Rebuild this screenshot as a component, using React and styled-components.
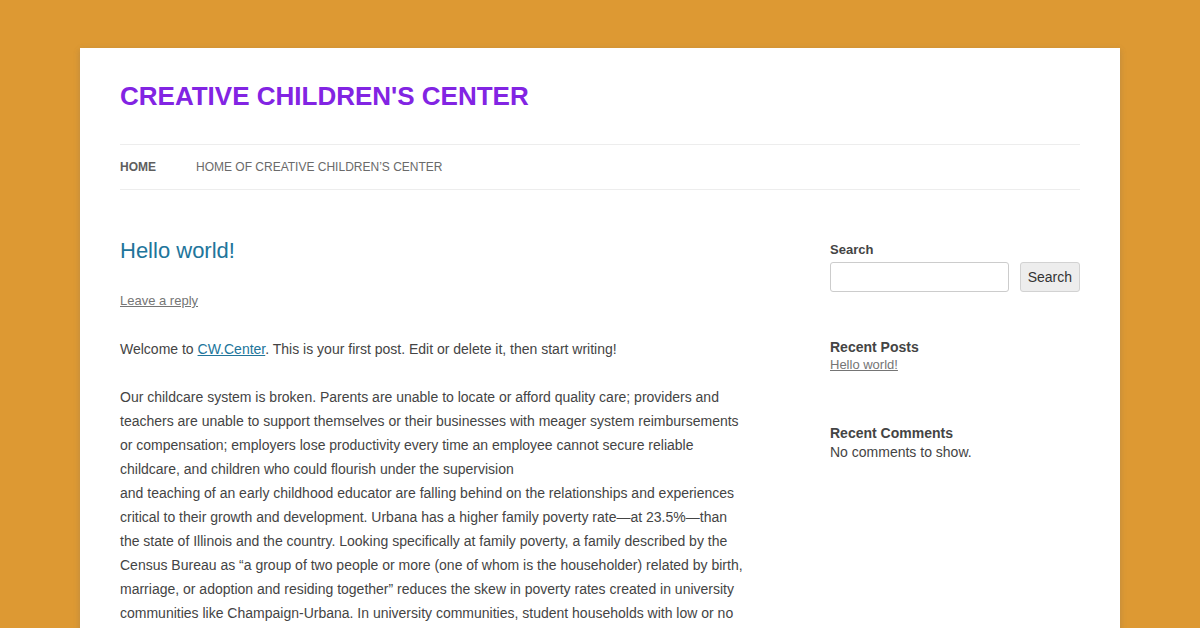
import styled, { createGlobalStyle } from "styled-components";

const GlobalStyle = createGlobalStyle`
  html, body {
    margin: 0;
    padding: 0;
    background: #dd9933;
    font-family: "Liberation Sans", Arial, sans-serif;
    color: #444;
  }
`;

const Page = styled.div`
  padding: 48px 80px 0;
  height: 628px;
  box-sizing: border-box;
  overflow: hidden;
`;

const Site = styled.div`
  background: #fff;
  padding: 0 40px;
  min-height: 700px;
  box-shadow: 0 2px 6px rgba(100, 100, 100, 0.3);
`;

const Header = styled.header`
  padding-top: 24px;
`;

const SiteTitle = styled.h1`
  margin: 0;
  font-size: 26px;
  line-height: 48px;
  font-weight: bold;
  color: #8224e3;
`;

const Nav = styled.nav`
  margin-top: 24px;
  border-top: 1px solid #ededed;
  border-bottom: 1px solid #ededed;
  display: flex;
  gap: 40px;
`;

const NavItem = styled.a`
  font-size: 12px;
  line-height: 44px;
  text-transform: uppercase;
  text-decoration: none;
  color: ${(p) => (p.$current ? "#5e5e5e" : "#6a6a6a")};
  font-weight: ${(p) => (p.$current ? "bold" : "normal")};
`;

const Main = styled.div`
  display: flex;
  justify-content: space-between;
  padding-top: 48px;
`;

const Content = styled.main`
  width: 625px;
`;

const EntryTitle = styled.h1`
  margin: 0;
  font-size: 22px;
  line-height: 26px;
  font-weight: normal;
  color: #21759b;
`;

const Meta = styled.a`
  display: block;
  margin-top: 25px;
  font-size: 13px;
  line-height: 24px;
  color: #757575;
  text-decoration: underline;
`;

const Para = styled.p`
  margin: 24px 0 0;
  font-size: 14px;
  line-height: 24px;
  color: #444;

  & + & {
    margin-top: 24px;
  }

  a {
    color: #21759b;
    text-decoration: underline;
  }
`;

const Sidebar = styled.aside`
  width: 250px;
`;

const Label = styled.div`
  font-size: 13px;
  line-height: 24px;
  font-weight: bold;
  color: #444;
`;

const SearchRow = styled.div`
  display: flex;
  gap: 11px;
`;

const SearchInput = styled.input`
  flex: 1;
  height: 30px;
  box-sizing: border-box;
  border: 1px solid #ccc;
  border-radius: 3px;
  padding: 0 6px;
  font-family: inherit;
  min-width: 0;
`;

const SearchButton = styled.button`
  height: 30px;
  padding: 0 7px;
  font-family: "Liberation Sans", Arial, sans-serif;
  font-size: 14px;
  color: #333;
  background: #ededed;
  border: 1px solid #d2d2d2;
  border-radius: 3px;
`;

const Widget = styled.section`
  margin-top: ${(p) => p.$gap}px;
`;

const WidgetTitle = styled.h3`
  margin: 0;
  font-size: 14px;
  line-height: 20px;
  font-weight: bold;
  color: #444;
`;

const WidgetLink = styled.a`
  display: block;
  font-size: 13px;
  line-height: 16px;
  color: #757575;
  text-decoration: underline;
`;

const WidgetText = styled.div`
  font-size: 14px;
  line-height: 18px;
  color: #444;
`;

export default function App() {
  return (
    <>
      <GlobalStyle />
      <Page>
        <Site>
          <Header>
            <SiteTitle>CREATIVE CHILDREN'S CENTER</SiteTitle>
            <Nav>
              <NavItem $current>Home</NavItem>
              <NavItem>Home of Creative Children’s Center</NavItem>
            </Nav>
          </Header>
          <Main>
            <Content>
              <EntryTitle>Hello world!</EntryTitle>
              <Meta>Leave a reply</Meta>
              <Para>
                Welcome to <a>CW.Center</a>. This is your first post. Edit or
                delete it, then start writing!
              </Para>
              <Para>
                Our childcare system is broken. Parents are unable to locate or
                afford quality care; providers and teachers are unable to
                support themselves or their businesses with meager system
                reimbursements or compensation; employers lose productivity
                every time an employee cannot secure reliable childcare, and
                children who could flourish under the supervision
                <br />
                and teaching of an early childhood educator are falling behind
                on the relationships and experiences critical to their growth
                and development. Urbana has a higher family poverty rate—at
                23.5%—than the state of Illinois and the country. Looking
                specifically at family poverty, a family described by the
                Census Bureau as “a group of two people or more (one of whom is
                the householder) related by birth, marriage, or adoption and
                residing together” reduces the skew in poverty rates created in
                university communities like Champaign-Urbana. In university
                communities, student households with low or no income can
                inflate poverty rates.
              </Para>
            </Content>
            <Sidebar>
              <Label>Search</Label>
              <SearchRow>
                <SearchInput type="text" />
                <SearchButton>Search</SearchButton>
              </SearchRow>
              <Widget $gap={45}>
                <WidgetTitle>Recent Posts</WidgetTitle>
                <WidgetLink>Hello world!</WidgetLink>
              </Widget>
              <Widget $gap={50}>
                <WidgetTitle>Recent Comments</WidgetTitle>
                <WidgetText>No comments to show.</WidgetText>
              </Widget>
            </Sidebar>
          </Main>
        </Site>
      </Page>
    </>
  );
}
